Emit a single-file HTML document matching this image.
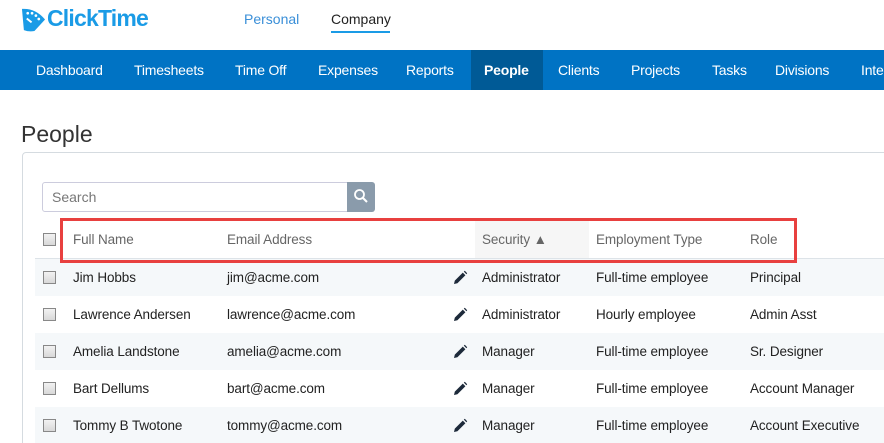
<!DOCTYPE html>
<html style="width:884px;height:443px;overflow:hidden"><head><style>
*{margin:0;padding:0;box-sizing:border-box}
body{width:884px;height:443px;overflow:hidden;background:#fff;font-family:"Liberation Sans",sans-serif;position:relative;color:#222}
.a{position:absolute;white-space:nowrap}
.nav{position:absolute;left:0;top:50px;width:884px;height:40px;background:#0073c4}
.nav span{position:absolute;top:12px;color:#fff;font-size:14px;letter-spacing:-0.2px}
.card{position:absolute;left:22px;top:152px;width:880px;height:300px;border:1px solid #d5dbe0;border-radius:4px}
.row{position:absolute;left:35px;width:849px;height:37px}
.row span{position:absolute;top:11px;font-size:13.5px;color:#222;letter-spacing:-0.1px}
.cb{position:absolute;left:8px;top:12px;width:13px;height:13px;border:1px solid #888;background:linear-gradient(#f2f2f2,#d8d8d8)}
.hd span{color:#666}
.pen{position:absolute;left:417px;top:11px}
</style></head><body>
<svg class="a" style="left:21px;top:7px" width="25" height="25" viewBox="0 0 26 26"><path d="M1 2 Q15 1 25 13 L14 25 Q8 26 3 24 Z" fill="#1a9be6"/><circle cx="7" cy="6.5" r="1.4" fill="#fff"/><circle cx="11.5" cy="6.5" r="1.4" fill="#fff"/><circle cx="15.5" cy="9" r="1.4" fill="#fff"/><circle cx="18.5" cy="12.5" r="1.4" fill="#fff"/><path d="M6 12 L11 16" stroke="#fff" stroke-width="2"/></svg>
<div class="a" style="left:47px;top:5px;font-size:23px;font-weight:bold;color:#1a9be6;letter-spacing:-0.8px">ClickTime</div>
<div class="a" style="left:244px;top:11px;font-size:14px;color:#3a8fd8">Personal</div>
<div class="a" style="left:331px;top:11px;font-size:14px;color:#222">Company</div>
<div class="a" style="left:331px;top:31px;width:59px;height:2px;background:#1a9be6"></div>
<div class="nav">
<span style="left:36px">Dashboard</span><span style="left:134px">Timesheets</span><span style="left:235px">Time Off</span><span style="left:318px">Expenses</span><span style="left:406px">Reports</span>
<div style="position:absolute;left:471px;top:0;width:72px;height:40px;background:#005a96"></div>
<span style="left:484px;font-weight:bold">People</span><span style="left:558px">Clients</span><span style="left:631px">Projects</span><span style="left:712px">Tasks</span><span style="left:775px">Divisions</span><span style="left:861px">Inte</span>
</div>
<div class="a" style="left:21px;top:121px;font-size:23px;color:#333">People</div>
<div class="card"></div>
<div class="a" style="left:42px;top:182px;width:306px;height:30px;border:1px solid #ccd;border-radius:3px 0 0 3px"></div>
<div class="a" style="left:52px;top:189px;font-size:14px;color:#777">Search</div>
<div class="a" style="left:347px;top:182px;width:28px;height:30px;background:#8a9bab;border-radius:0 3px 3px 0"></div>
<svg class="a" style="left:352px;top:187px" width="18" height="18"><circle cx="7.5" cy="7.5" r="4.5" fill="none" stroke="#fff" stroke-width="1.8"/><path d="M11 11 L15 15" stroke="#fff" stroke-width="2"/></svg>
<div class="row hd" style="top:221px;background:#fff"><div class="cb"></div>
<div style="position:absolute;left:440px;top:0;width:114px;height:37px;background:#f6f6f6"></div>
<span style="left:38px">Full Name</span><span style="left:192px">Email Address</span><span style="left:447px">Security ▲</span><span style="left:561px">Employment Type</span><span style="left:715px">Role</span></div>
<div class="a" style="left:35px;top:258px;width:849px;height:1px;background:#dde3e8"></div>
<div class="row" style="top:259px;background:#f5f8fa"><div class="cb"></div><span style="left:38px">Jim Hobbs</span><span style="left:192px">jim@acme.com</span><svg class="pen" width="16" height="16" viewBox="0 0 16 16"><path d="M2 14 L2.8 10.6 L10.8 2.6 L13.4 5.2 L5.4 13.2 Z M11.8 1.6 L12.8 0.8 L15.2 3.2 L14.4 4.2 Z" fill="#1d2a3a"/></svg><span style="left:447px">Administrator</span><span style="left:561px">Full-time employee</span><span style="left:715px">Principal</span></div>
<div class="row" style="top:296px"><div class="cb"></div><span style="left:38px">Lawrence Andersen</span><span style="left:192px">lawrence@acme.com</span><svg class="pen" width="16" height="16" viewBox="0 0 16 16"><path d="M2 14 L2.8 10.6 L10.8 2.6 L13.4 5.2 L5.4 13.2 Z M11.8 1.6 L12.8 0.8 L15.2 3.2 L14.4 4.2 Z" fill="#1d2a3a"/></svg><span style="left:447px">Administrator</span><span style="left:561px">Hourly employee</span><span style="left:715px">Admin Asst</span></div>
<div class="row" style="top:333px;background:#f5f8fa"><div class="cb"></div><span style="left:38px">Amelia Landstone</span><span style="left:192px">amelia@acme.com</span><svg class="pen" width="16" height="16" viewBox="0 0 16 16"><path d="M2 14 L2.8 10.6 L10.8 2.6 L13.4 5.2 L5.4 13.2 Z M11.8 1.6 L12.8 0.8 L15.2 3.2 L14.4 4.2 Z" fill="#1d2a3a"/></svg><span style="left:447px">Manager</span><span style="left:561px">Full-time employee</span><span style="left:715px">Sr. Designer</span></div>
<div class="row" style="top:370px"><div class="cb"></div><span style="left:38px">Bart Dellums</span><span style="left:192px">bart@acme.com</span><svg class="pen" width="16" height="16" viewBox="0 0 16 16"><path d="M2 14 L2.8 10.6 L10.8 2.6 L13.4 5.2 L5.4 13.2 Z M11.8 1.6 L12.8 0.8 L15.2 3.2 L14.4 4.2 Z" fill="#1d2a3a"/></svg><span style="left:447px">Manager</span><span style="left:561px">Full-time employee</span><span style="left:715px">Account Manager</span></div>
<div class="row" style="top:407px;background:#f5f8fa"><div class="cb"></div><span style="left:38px">Tommy B Twotone</span><span style="left:192px">tommy@acme.com</span><svg class="pen" width="16" height="16" viewBox="0 0 16 16"><path d="M2 14 L2.8 10.6 L10.8 2.6 L13.4 5.2 L5.4 13.2 Z M11.8 1.6 L12.8 0.8 L15.2 3.2 L14.4 4.2 Z" fill="#1d2a3a"/></svg><span style="left:447px">Manager</span><span style="left:561px">Full-time employee</span><span style="left:715px">Account Executive</span></div>
<div class="a" style="left:60px;top:218px;width:737px;height:45px;border:3px solid #e8403f"></div>
</body></html>
